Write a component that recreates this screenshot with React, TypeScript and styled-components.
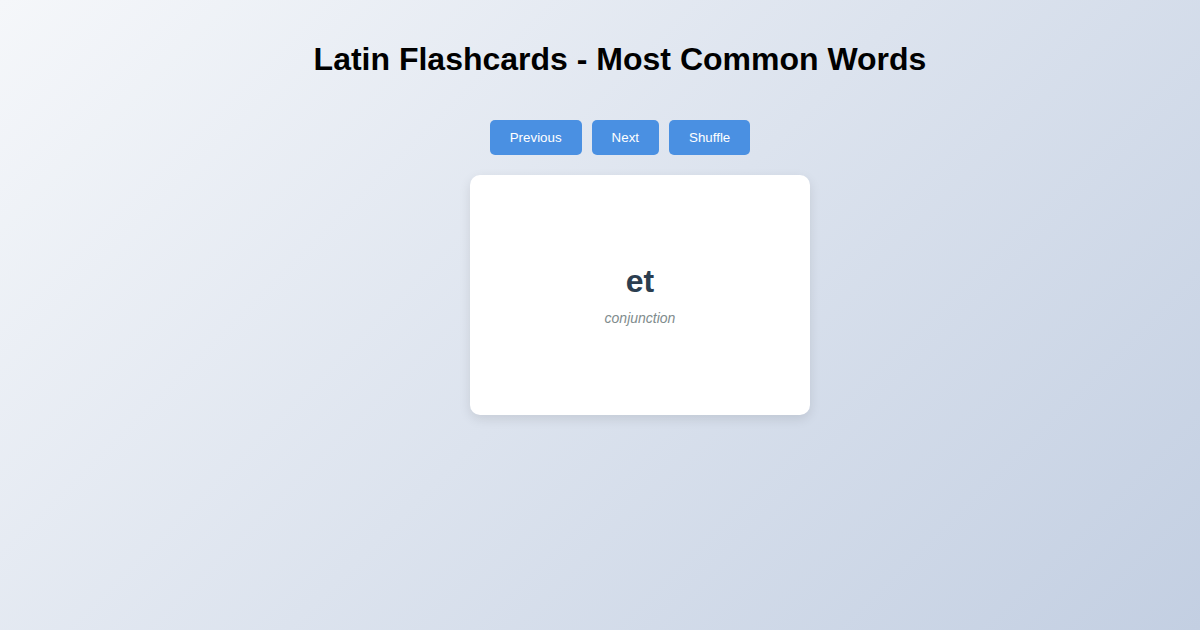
import React, { useCallback, useMemo, useState } from "react";
import styled, { createGlobalStyle } from "styled-components";

type Card = { word: string; kind: string; meaning: string };

const WORDS: Card[] = [
  { word: "et", kind: "conjunction", meaning: "and" },
  { word: "in", kind: "preposition", meaning: "in, on; into" },
  { word: "sum", kind: "verb", meaning: "to be" },
  { word: "non", kind: "adverb", meaning: "not" },
  { word: "qui", kind: "pronoun", meaning: "who, which" },
];

const GlobalStyle = createGlobalStyle`
  html, body {
    margin: 0;
    padding: 0;
  }
  body {
    min-height: 630px;
    font-family: "Liberation Sans", Arial, sans-serif;
    background: linear-gradient(135deg, #f5f7fa 0%, #c3cfe2 100%);
    background-attachment: fixed;
  }
`;

const Page = styled.div`
  display: flex;
  flex-direction: column;
  align-items: center;
  padding: 20px 0 20px 40px;
`;

const Title = styled.h1`
  margin: 21px 0 42px;
  font-size: 32px;
  font-weight: 700;
  color: #000;
  text-align: center;
`;

const Controls = styled.div`
  display: flex;
  gap: 10px;
  margin-bottom: 20px;
`;

const Button = styled.button`
  padding: 10px 20px;
  border: none;
  border-radius: 5px;
  background: #4a90e2;
  color: #fff;
  font-family: "Liberation Sans", Arial, sans-serif;
  font-size: 13.33px;
  cursor: pointer;

  &:hover {
    background: #357abd;
  }
`;

const CardSlot = styled.div`
  padding-left: 40px;
`;

const CardFace = styled.div`
  width: 340px;
  height: 240px;
  box-sizing: border-box;
  padding-bottom: 2px;
  display: flex;
  flex-direction: column;
  align-items: center;
  justify-content: center;
  gap: 10px;
  background: #fff;
  border-radius: 10px;
  box-shadow: 0 4px 12px rgba(0, 0, 0, 0.1);
  cursor: pointer;
`;

const Word = styled.div`
  font-size: 32px;
  font-weight: 700;
  color: #2c3e50;
`;

const Kind = styled.div`
  font-size: 14px;
  font-style: italic;
  color: #7f8c8d;
`;

export default function App() {
  const [order, setOrder] = useState(() => WORDS.map((_, i) => i));
  const [pos, setPos] = useState(0);
  const [flipped, setFlipped] = useState(false);

  const card = useMemo(() => WORDS[order[pos]], [order, pos]);

  const handlePrev = useCallback(() => {
    setFlipped(false);
    setPos((p) => (p - 1 + WORDS.length) % WORDS.length);
  }, []);
  const handleNext = useCallback(() => {
    setFlipped(false);
    setPos((p) => (p + 1) % WORDS.length);
  }, []);
  const handleShuffle = useCallback(() => {
    setFlipped(false);
    setPos(0);
    setOrder((o) => [...o].sort(() => Math.random() - 0.5));
  }, []);

  return (
    <>
      <GlobalStyle />
      <Page>
        <Title>Latin Flashcards - Most Common Words</Title>
        <Controls>
          <Button onClick={handlePrev}>Previous</Button>
          <Button onClick={handleNext}>Next</Button>
          <Button onClick={handleShuffle}>Shuffle</Button>
        </Controls>
        <CardSlot>
          <CardFace onClick={() => setFlipped((f) => !f)}>
            {flipped ? (
              <Word>{card.meaning}</Word>
            ) : (
              <>
                <Word>{card.word}</Word>
                <Kind>{card.kind}</Kind>
              </>
            )}
          </CardFace>
        </CardSlot>
      </Page>
    </>
  );
}
